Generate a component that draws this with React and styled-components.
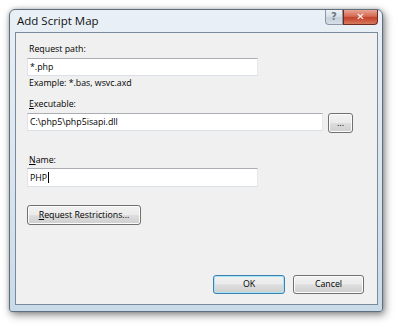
import React from 'react';
import styled, { createGlobalStyle } from 'styled-components';

const Global = createGlobalStyle`
  html, body {
    margin: 0;
    padding: 0;
    background: #ffffff;
  }
  body {
    width: 400px;
    height: 329px;
    overflow: hidden;
    font-family: "Open Sans", "Noto Sans", "Liberation Sans", sans-serif;
  }
`;

const Page = styled.div`
  padding: 9px 0 0 9px;
`;

const Window = styled.div`
  width: 374px;
  height: 303px;
  box-sizing: border-box;
  display: flex;
  flex-direction: column;
  border: 1px solid #5f6f7f;
  border-radius: 6px 6px 3px 3px;
  background: linear-gradient(180deg, #e9f0f6 0%, #dfe8f0 40%, #c9dbe8 100%);
  box-shadow: 2px 3px 8px rgba(0, 0, 0, 0.45), 0 0 4px rgba(0, 0, 0, 0.2);
  padding: 0 4px 6px 5px;
`;

const TitleBar = styled.div`
  height: 22px;
  display: flex;
  align-items: flex-start;
  justify-content: space-between;
`;

const Title = styled.div`
  font-size: 11.5px;
  color: #111;
  padding: 4px 0 0 2px;
  line-height: 14px;
`;

const Controls = styled.div`
  display: flex;
`;

const CtrlButton = styled.div`
  height: 15px;
  width: ${p => (p.$close ? 35 : 18)}px;
  box-sizing: border-box;
  border: 1px solid ${p => (p.$close ? '#6d2b22' : '#8a97a6')};
  border-top: none;
  border-radius: ${p => (p.$close ? '0 0 4px 0' : '0 0 0 4px')};
  background: ${p =>
    p.$close
      ? 'linear-gradient(180deg, #e8a594 0%, #d46a52 45%, #c4412a 55%, #d77a5d 100%)'
      : 'linear-gradient(180deg, #eef2f6 0%, #d9e1ea 45%, #c5d0dc 55%, #d6dfe8 100%)'};
  display: flex;
  align-items: center;
  justify-content: center;
  font-family: "DejaVu Sans", sans-serif;
  font-weight: bold;
  font-size: 10px;
  color: ${p => (p.$close ? '#ffffff' : '#6b7785')};
  line-height: 1;
`;

const Client = styled.div`
  flex: 1;
  background: #f0f0f0;
  border: 1px solid #7a8a9c;
  display: flex;
  flex-direction: column;
  padding: 0 0 0 11px;
`;

const Label = styled.div`
  font-size: 8.8px;
  line-height: 12px;
  color: #000;
  margin-top: ${p => p.$top || 0}px;
  padding-left: 2px;
`;

const U = styled.span`
  text-decoration: underline;
  text-underline-offset: 1px;
`;

const Field = styled.div`
  width: ${p => p.$w}px;
  height: ${p => p.$h || 18}px;
  box-sizing: border-box;
  background: #ffffff;
  border: 1px solid #dbdfe6;
  border-top-color: #abadb3;
  border-left-color: #e2e3ea;
  border-right-color: #e3e9ef;
  font-size: 8.8px;
  color: #000;
  padding-left: 2px;
  margin-top: ${p => p.$top || 0}px;
  display: flex;
  align-items: center;
`;

const Caret = styled.span`
  display: inline-block;
  width: 1px;
  height: 11px;
  background: #000;
  margin-left: 1px;
`;

const Row = styled.div`
  display: flex;
  align-items: flex-start;
  gap: 5px;
  margin-top: ${p => p.$top || 0}px;
`;

const Button = styled.div`
  width: ${p => p.$w}px;
  height: ${p => p.$h || 19}px;
  box-sizing: border-box;
  border: 1px solid ${p => (p.$default ? '#3c7fb1' : '#707070')};
  border-radius: 3px;
  box-shadow: inset 0 0 0 1px ${p => (p.$default ? '#a6e4f7' : '#fcfcfc')};
  background: linear-gradient(180deg, #f2f2f2 0%, #ebebeb 48%, #dddddd 52%, #cfcfcf 100%);
  font-size: 8.8px;
  color: #000;
  display: flex;
  align-items: center;
  justify-content: center;
  line-height: 1;
  margin-top: ${p => p.$top || 0}px;
`;

const Footer = styled.div`
  margin-top: auto;
  display: flex;
  justify-content: flex-end;
  gap: 8px;
  padding: 0 13px 10px 0;
`;

export default function App() {
  return (
    <Page>
      <Global />
      <Window>
        <TitleBar>
          <Title>Add Script Map</Title>
          <Controls>
            <CtrlButton>?</CtrlButton>
            <CtrlButton $close>✕</CtrlButton>
          </Controls>
        </TitleBar>
        <Client>
          <Label $top={10}>Request path:</Label>
          <Field $w={231} $top={3}>*.php</Field>
          <Label $top={1}>Example: *.bas, wsvc.axd</Label>
          <Label $top={9}><U>E</U>xecutable:</Label>
          <Row $top={3}>
            <Field $w={296}>C:\php5\php5isapi.dll</Field>
            <Button $w={25} $h={20}>...</Button>
          </Row>
          <Label $top={21}><U>N</U>ame:</Label>
          <Field $w={231} $h={19} $top={2}>PHP<Caret /></Field>
          <Button $w={114} $h={20} $top={18}><span><U>R</U>equest Restrictions...</span></Button>
          <Footer>
            <Button $w={72} $default>OK</Button>
            <Button $w={71}>Cancel</Button>
          </Footer>
        </Client>
      </Window>
    </Page>
  );
}
